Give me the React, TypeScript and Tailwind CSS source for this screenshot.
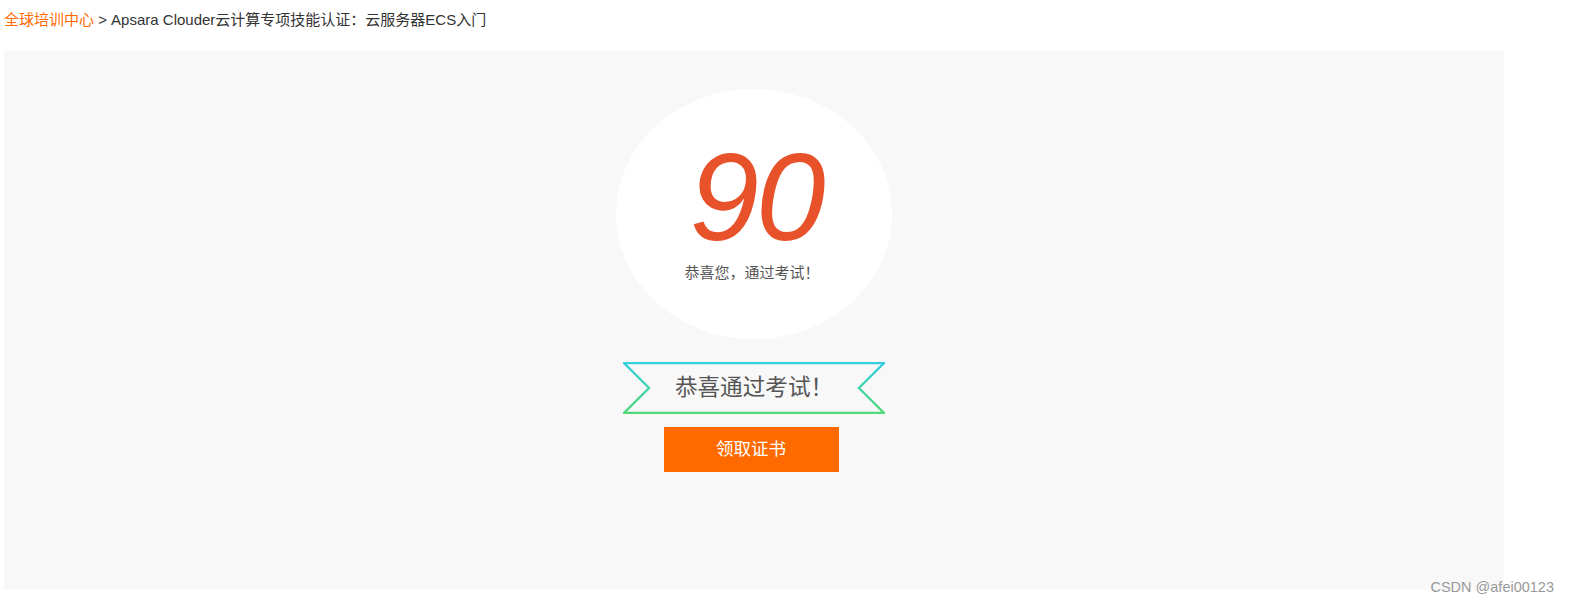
import React from "react";

const font = { fontFamily: '"Liberation Sans", "Noto Sans CJK SC", sans-serif' };

const Ribbon = () => (
  <svg width="262" height="52" viewBox="0 0 262 52" className="absolute left-0 top-0">
    <defs>
      <linearGradient id="rb" x1="0" y1="0" x2="0" y2="1">
        <stop offset="0%" stopColor="#36cfe2" />
        <stop offset="100%" stopColor="#52d978" />
      </linearGradient>
    </defs>
    <polygon
      points="1,1 261,1 236,26 261,51 1,51 26,26"
      fill="none"
      stroke="url(#rb)"
      strokeWidth="2.4"
      strokeLinejoin="miter"
    />
  </svg>
);

const App = () => {
  return (
    <div className="relative w-[1571px] h-[604px] bg-white text-[#333]" style={font}>
      <div className="h-[51px] pl-[4px] pt-[10px] text-[15px] leading-[20px]">
        <span className="text-[#ff6a00]">全球培训中心</span>
        <span> &gt; Apsara Clouder云计算专项技能认证：云服务器ECS入门</span>
      </div>

      <div className="ml-[4px] w-[1500px] h-[539px] bg-[#f8f8f8] pt-[38px] flex flex-col items-center">
        <div className="w-[276px] h-[250px] rounded-[50%] bg-white flex flex-col items-center">
          <div className="mt-[58px] h-[100px] text-[125px] leading-[100px] italic text-[#e8522a] tracking-[-3px] pl-[4px]">
            90
          </div>
          <div className="mt-[16px] text-[15px] leading-[20px] text-[#555] pr-[4px]">恭喜您，通过考试！</div>
        </div>

        <div className="relative mt-[23px] w-[262px] h-[52px] flex items-center justify-center">
          <Ribbon />
          <span className="relative text-[22.6px] leading-[28px] text-[#555]">恭喜通过考试！</span>
        </div>

        <button className="mt-[13px] mr-[6px] w-[175px] h-[45px] bg-[#ff6a00] text-white text-[17.5px]">
          领取证书
        </button>
      </div>

      <div className="absolute right-[17px] top-[577px] text-[14.5px] leading-[20px] text-[#999]">
        CSDN @afei00123
      </div>
    </div>
  );
};

export default App;
